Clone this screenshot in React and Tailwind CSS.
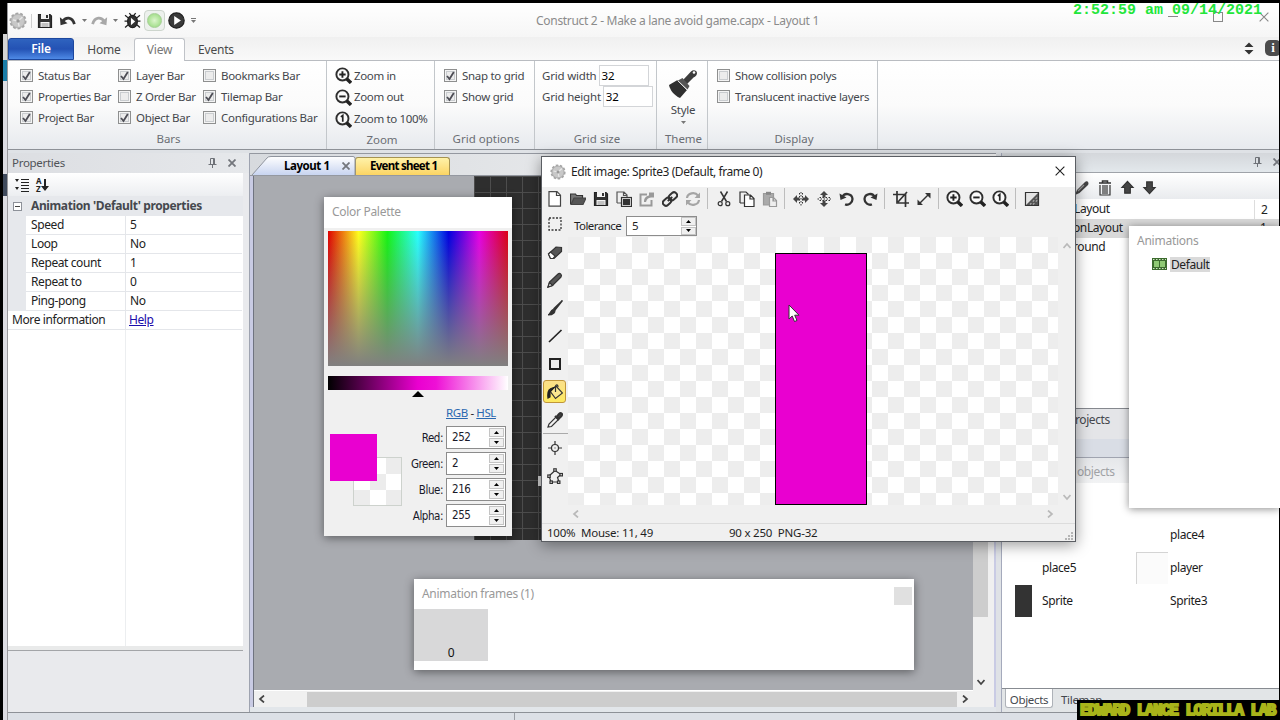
import React from 'react';
import clsx from 'clsx';

const Icon = ({ children, size = 16, className }) => (
  <svg width={size} height={size} viewBox="0 0 16 16" fill="none" stroke="#333" strokeWidth="1.2" className={clsx('shrink-0', className)}>
    {children}
  </svg>
);

const Gear = ({ size = 18 }) => (
  <Icon size={size}>
    <circle cx="8" cy="8" r="6.6" fill="#b5b5b5" stroke="#a5a5a5" strokeWidth="2" strokeDasharray="2.4 1.7" />
    <circle cx="8" cy="8" r="5.8" fill="#c8c8c8" stroke="#b5b5b5" strokeWidth="0.8" />
    <path d="M8 8L12 4.5M8 8L3.5 7M8 8l1 5" stroke="#e8e8e8" />
    <circle cx="8" cy="8" r="1.5" fill="#999" stroke="none" />
  </Icon>
);

const Save = ({ size = 16 }) => (
  <Icon size={size}>
    <path d="M1.5 1.5h11.5l1.5 1.5v11.500h-13z" fill="#333" stroke="#222" />
    <rect x="4" y="1" width="8" height="5" fill="#f4f4f4" stroke="none" />
    <rect x="9" y="2" width="2" height="3" fill="#333" stroke="none" />
    <rect x="3.500" y="9" width="9" height="5" fill="#f4f4f4" stroke="none" />
    <path d="M4.500 11h7M4.500 13h7" stroke="#777" strokeWidth="0.8" />
  </Icon>
);

const Curve = ({ color, flip }) => (
  <Icon size={17} className={flip ? '-scale-x-100' : ''}>
    <path d="M3.500 9C6 4.500 12.500 4 14.500 11.500" stroke={color} strokeWidth="2.600" />
    <path d="M0.800 5l0.700 7.500 6.500-2z" fill={color} stroke="none" />
  </Icon>
);

const Bug = () => (
  <Icon size={17}>
    <path d="M1 3l3.500 3M15 3l-3.500 3M0.500 8.500h4M15.500 8.500h-4M1 14.500l3.500-3M15 14.500l-3.500-3M5 1l2 2.500M11 1l-2 2.500" stroke="#222" />
    <ellipse cx="8" cy="9" rx="4.600" ry="5.800" fill="#333" stroke="#222" />
    <path d="M6.500 5.500l4 3.500-4 3.500z" fill="#fff" stroke="none" />
  </Icon>
);

const Play = () => (
  <Icon size={17}>
    <circle cx="8" cy="8" r="7.200" fill="#3a3a3a" stroke="#222" />
    <path d="M5.800 3.800l6.400 4.200-6.400 4.200z" fill="#fff" stroke="none" />
  </Icon>
);

const Zoom = ({ kind }) => (
  <Icon size={17}>
    <circle cx="7" cy="7" r="5.700" stroke="#2e2e2e" strokeWidth="1.800" fill="#fafafa" />
    <path d="M11 11l4 4" stroke="#222" strokeWidth="3.200" />
    {kind === 'in' && <path d="M4 7h6M7 4v6" stroke="#222" strokeWidth="1.800" />}
    {kind === 'out' && <path d="M4 7h6" stroke="#222" strokeWidth="1.800" />}
    {kind === 'one' && <path d="M5.500 5.500L7.300 4.200V10" stroke="#222" strokeWidth="1.600" />}
  </Icon>
);

const Brush = () => (
  <svg width="30" height="31" viewBox="0 0 30 31">
    <path d="M15 12L23 3.500c2-2 5.800-1.500 6 1.500 0 2.500-1.500 3.300-3.500 4.500L19 16z" fill="#3c3c3c" />
    <circle cx="26" cy="4.500" r="1.300" fill="#fff" />
    <path d="M10 12.500l4.500-2.500 7 8-2 3.500z" fill="#555" />
    <path d="M9.500 12L1 17c1 5 5 10.500 11 13l7-8z" fill="#2f2f2f" />
    <path d="M9.500 12.500l9.500 9.500" stroke="#ddd" strokeWidth="1" />
  </svg>
);

const Pin = () => (
  <svg width="9" height="10" viewBox="0 0 9 10" fill="none" stroke="#6f7278">
    <path d="M2.500 6V0.500h4V6M5.500 0.500V6M0.500 6.500h8M4.500 6.500V10" />
  </svg>
);

const Cross = ({ size = 8, color = '#73767c', width = 1.800 }) => (
  <svg width={size} height={size} viewBox="0 0 8 8" stroke={color} strokeWidth={width} className="shrink-0">
    <path d="M0.500 0.500l7 7M7.500 0.500l-7 7" />
  </svg>
);

const Chevron = ({ d, color = '#b9b9b9' }) => (
  <svg width="8" height="8" viewBox="0 0 8 8" fill="none" stroke={color} strokeWidth="1.700" className="shrink-0">
    <path d={d} />
  </svg>
);
const LEFT = 'M6 0.500L2 4l4 3.500';
const RIGHT = 'M2 0.500L6 4 2 7.500';
const UP = 'M0.500 6L4 2l3.500 4';
const DOWN = 'M0.500 2L4 6l3.500-4';

const Check = ({ on, children }) => (
  <label className="flex h-[21px] items-center whitespace-nowrap">
    <span className="mr-[5px] flex size-[13px] items-center justify-center border border-[#8e8f8f] bg-[#f4f4f4]">
      <span className="flex size-[9px] items-center justify-center border border-[#c9cccf] bg-[#ececec]">
        {on && (
          <svg width="9" height="10" viewBox="0 0 9 10" fill="none" stroke="#4d4d55" strokeWidth="1.800" className="shrink-0">
            <path d="M1 5l2.500 3L7.800 1" />
          </svg>
        )}
      </span>
    </span>
    {children}
  </label>
);

const Group = ({ title, className, children }) => (
  <div className={clsx('flex shrink-0 flex-col border-r border-[#c3c7cb] pt-[4px]', className)}>
    <div className="h-[65px]">{children}</div>
    <div className="pl-[3px] text-center leading-[20px] tracking-normal text-[#6b6e74]">{title}</div>
  </div>
);

const Caret = () => (
  <svg width="5" height="3" viewBox="0 0 5 3" fill="#777"><path d="M0 0h5L2.500 3z" /></svg>
);

const TitleBar = () => (
  <div className="flex h-[34px] items-center bg-gradient-to-b from-white to-[#f6f6f6]">
    <div className="flex w-[190px] shrink-0 items-center pt-px">
      <div className="ml-px flex w-[22px] justify-start"><Gear /></div>
      <div className="mr-[5px] h-[14px] w-px bg-[#cfcfcf]" />
      <Save />
      <div className="ml-[6px]"><Curve color="#333" /></div>
      <div className="ml-[6px]"><Caret /></div>
      <div className="ml-[4px]"><Curve color="#a8a8a8" flip /></div>
      <div className="ml-[5px]"><Caret /></div>
      <div className="ml-[6px]"><Bug /></div>
      <div className="ml-[3px] flex size-[21px] items-center justify-center rounded-sm border border-[#cdd5cd] bg-[#edf1ed]">
        <div className="size-[15px] rounded-full border border-[#a6cf96] bg-radial from-[#dcf5cc] to-[#8fd673]" />
      </div>
      <div className="ml-[3px]"><Play /></div>
      <div className="ml-[6px] flex flex-col items-center gap-px"><div className="h-px w-[5px] bg-[#777]" /><Caret /></div>
    </div>
    <div className="w-[959px] pt-px text-center text-[12px] tracking-[-0.310px] text-[#8b8b8b]">Construct 2 - Make a lane avoid game.capx - Layout 1</div>
    <div className="ml-[11px] flex items-center pb-[7px]">
      <div className="h-px w-[10px] bg-[#888]" />
      <div className="ml-[35px] size-[10px] border border-[#888]" />
      <div className="ml-[36px]"><Cross size={10} color="#888" width={0.900} /></div>
    </div>
  </div>
);

const Tabs = () => (
  <div className="flex h-[24px] items-end border-b border-[#b9bcc1] bg-gradient-to-b from-[#f0f0f0] to-[#f9f9f9] tracking-[-0.2px] text-[#4a4a4a]">
    <div className="h-[22px] w-[66px] rounded-t-[3px] border border-[#1c479e] bg-gradient-to-b from-[#2f63bf] via-[#2452b4] to-[#4f8ae6] text-center leading-[20px] font-semibold text-white">File</div>
    <div className="w-[60px] text-center leading-[21px]">Home</div>
    <div className="-mb-px h-[23px] w-[51px] rounded-t-[3px] border border-b-0 border-[#c0c3c8] bg-white text-center leading-[22px] text-[#777]">View</div>
    <div className="w-[62px] text-center leading-[21px]">Events</div>
    <div className="ml-auto flex h-[24px] items-center gap-[11px]">
      <svg width="10" height="13" viewBox="0 0 10 13" fill="#333"><path d="M0.500 5L5 0.500 9.500 5zM0.500 8L5 12.500 9.500 8z" /></svg>
      <div className="-mr-[2px] flex size-[16px] items-center justify-center rounded-[5px] bg-[#4c4c4c] font-['Liberation_Serif'] text-[13px] font-bold text-white">i</div>
    </div>
  </div>
);

const Ribbon = () => (
  <div className="flex h-[89px] border-b border-[#8d9197] bg-gradient-to-b from-white via-[#fbfbfb] to-[#e7eaee] text-[11.500px] tracking-[-0.300px] text-[#44474c]">
    <Group title="Bars" className="w-[319px]">
      <div className="flex pl-[12px]">
        <div className="w-[98px]"><Check on>Status Bar</Check><Check on>Properties Bar</Check><Check on>Project Bar</Check></div>
        <div className="w-[85px]"><Check on>Layer Bar</Check><Check>Z Order Bar</Check><Check on>Object Bar</Check></div>
        <div><Check>Bookmarks Bar</Check><Check on>Tilemap Bar</Check><Check>Configurations Bar</Check></div>
      </div>
    </Group>
    <Group title="Zoom" className="w-[108px]">
      <div className="pl-[8px] tracking-[-0.350px]">
        <div className="flex h-[21px] items-center gap-[2px]"><Zoom kind="in" />Zoom in</div>
        <div className="flex h-[22px] items-center gap-[2px]"><Zoom kind="out" />Zoom out</div>
        <div className="flex h-[22px] items-center gap-[2px] whitespace-nowrap"><Zoom kind="one" />Zoom to 100%</div>
      </div>
    </Group>
    <Group title="Grid options" className="w-[100px]">
      <div className="pl-[9px]"><Check on>Snap to grid</Check><Check on>Show grid</Check></div>
    </Group>
    <Group title="Grid size" className="w-[122px]">
      <div className="pl-[7px] tracking-[-0.200px]">
        <div className="flex h-[21px] items-center gap-[2px] whitespace-nowrap">Grid width<span className="h-[21px] w-[50px] border border-[#d3d5d8] bg-white pl-[2px] leading-[19px] text-black">32</span></div>
        <div className="flex h-[21px] items-center gap-[2px] whitespace-nowrap">Grid height<span className="h-[21px] w-[50px] border border-[#d3d5d8] bg-white pl-[2px] leading-[19px] text-black">32</span></div>
      </div>
    </Group>
    <Group title="Theme" className="w-[51px]">
      <div className="flex flex-col items-center pt-[3px] pl-[2px] leading-[16px]"><Brush /><span className="mt-[3px]">Style</span><span className="mt-[3px]"><Caret /></span></div>
    </Group>
    <Group title="Display" className="w-[170px]">
      <div className="pl-[9px]"><Check>Show collision polys</Check><Check>Translucent inactive layers</Check></div>
    </Group>
  </div>
);

const props = [['Speed', '5'], ['Loop', 'No'], ['Repeat count', '1'], ['Repeat to', '0'], ['Ping-pong', 'No']];

const Properties = () => (
  <div className="flex w-[241px] shrink-0 flex-col bg-[#e9eaed]">
    <div className="flex h-[20px] items-center bg-gradient-to-r from-[#dcdee2] to-[#e6e8eb] pr-[13px] pl-[4px] text-[11.500px] tracking-[-0.300px] text-[#505358]">
      Properties<span className="mr-[11px] ml-auto"><Pin /></span><Cross />
    </div>
    <div className="flex h-[23px] w-[235px] items-center gap-[7px] bg-gradient-to-b from-white to-[#eceef1] pl-[7px]">
      <svg width="14" height="14" viewBox="0 0 14 14" fill="#222"><path d="M0 1h4L2 4zM0 9h4l-2 3zM6 1h8v1H6zM6 4h8v1H6zM6 7h8v1H6zM6 10h8v1H6zM6 13h8v1H6z" /></svg>
      <div className="flex items-center">
        <div className="flex flex-col text-[8px] leading-[8px] font-bold text-[#222]"><span>A</span><span>Z</span></div>
        <svg width="8" height="12" viewBox="0 0 8 12" fill="#222"><path d="M3 0h2v7h3L4 12 0 7h3z" /></svg>
      </div>
    </div>
    <div className="flex h-[20px] w-[235px] items-center bg-[#e6e8ec] pl-[5px] text-[12px] font-bold text-[#45484e]">
      <span className="mr-[9px] flex size-[9px] items-center justify-center border border-[#8d9199] bg-white"><span className="h-px w-[5px] bg-[#444]" /></span>
      <span className="tracking-[-0.380px]">Animation 'Default' properties</span>
    </div>
    {props.map(([name, value]) => (
      <div key={name} className="flex h-[19px] w-[235px] bg-white pr-px leading-[18px] text-[#222]">
        <div className="w-[18px] bg-[#e6e8ec]" />
        <div className="w-[100px] border-r border-b border-[#e4e6ea] pl-[5px]">{name}</div>
        <div className="flex-1 border-b border-[#e4e6ea] pl-[4px]">{value}</div>
      </div>
    ))}
    <div className="flex h-[19px] w-[235px] bg-white pr-px leading-[18px] text-[#222]">
      <div className="w-[118px] border-r border-b border-[#e4e6ea] pl-[4px]">More information</div>
      <div className="flex-1 border-b border-[#e4e6ea] pl-[3px] text-[#1a0dab] underline">Help</div>
    </div>
    <div className="flex w-[235px] flex-1 bg-white"><div className="w-[118px] border-r border-[#eceef0]" /></div>
    <div className="h-[5px] w-[235px] border-b border-[#a3a5a8] bg-[#e9eaea]" />
    <div className="h-[61px]" />
  </div>
);

const Workspace = () => (
  <div className="flex w-[747px] shrink-0 flex-col border-l border-[#9ea3b0] bg-[#e2e6ea]">
    <div className="relative flex h-[23px] shrink-0 items-end border-t border-b border-[#9498a0] bg-gradient-to-r from-[#d7dade] to-[#fafafa]">
      <div className="relative flex h-[19px] w-[105px] items-center pl-[34px] text-[11.500px] font-bold text-black">
        <svg className="absolute top-0 left-0" width="106" height="19" viewBox="0 0 106 19">
          <defs><linearGradient id="tab" x1="0" y1="0" x2="0" y2="1"><stop offset="0" stopColor="#fff" /><stop offset="1" stopColor="#c8d4f0" /></linearGradient></defs>
          <path d="M2 19L17 2q1-1.500 4-1.500h82q2 0 2 2V19" fill="url(#tab)" stroke="#8f949e" />
        </svg>
        <span className="relative tracking-[-0.450px]">Layout 1</span>
        <span className="relative ml-auto pr-[5px]"><Cross /></span>
      </div>
      <div className="h-[18px] w-[95px] rounded-t-[3px] border border-b-0 border-[#a59352] bg-gradient-to-b from-[#fff2a8] to-[#fbd462] pl-[14px] text-[11.500px] leading-[16px] font-bold tracking-[-0.730px] whitespace-nowrap text-black">Event sheet 1</div>
    </div>
    <div className="flex h-[531px] border-l-[3px] border-[#c9cbe4]">
      <div className="flex w-[720px] shrink-0 flex-col border-l border-[#6f7380]">
        <div className="h-[514px] w-[719px] bg-[#a9abb0] pl-[220px]">
          <div className="h-[364px] bg-[#2e2e2e] bg-[linear-gradient(to_right,#4d4d4d_1px,transparent_1px),linear-gradient(to_bottom,#4d4d4d_1px,transparent_1px)] bg-[size:16px_16px]" />
        </div>
        <div className="flex h-[17px] w-[719px] items-center border-t border-white bg-[#f0f0f0]">
          <span className="w-[53px] pl-[4px]"><Chevron d={LEFT} color="#444" /></span>
          <div className="h-[15px] flex-1 bg-[#cdcdcd]" />
          <span className="w-[16px] pl-[4px]"><Chevron d={RIGHT} color="#444" /></span>
        </div>
      </div>
      <div className="flex w-[23px] flex-col border-r-[2px] border-[#c9cbe4] bg-[#f0f0f0]">
        <div className="h-[441px] w-[15px] bg-[#cdcdcd]" />
        <div className="mt-[61px] ml-[4px]"><Chevron d={DOWN} color="#444" /></div>
      </div>
    </div>
  </div>
);

const RightPanels = () => (
  <div className="ml-[5px] flex flex-1 flex-col border-l border-[#a5aabc] bg-[#e3e6ea]">
    <div className="flex h-[20px] items-center border-b border-[#9fa3a9] bg-gradient-to-b from-[#d4d7db] to-[#e3e8ec]">
      <span className="mr-[11px] ml-auto"><Pin /></span><span className="-mr-[2px]"><Cross /></span>
    </div>
    <div className="flex h-[26px] items-center gap-[7px] bg-gradient-to-b from-white to-[#e9ebee] pt-[4px] pl-[72px]">
      <Icon><path d="M1 15l2-5 8-8c2-2 4.500 0.500 3 3l-8.500 8z" fill="#444" stroke="none" /><path d="M4 11l6-6" stroke="#999" /></Icon>
      <Icon><path d="M2 3h12M5.500 3V1h5v2" strokeWidth="1.500" /><path d="M3 5v10h10V5M6 5v9M8 5v9M10 5v9" /></Icon>
      <Icon size={15}><path d="M8 1.500l6 6.500h-3v6H5V8H2z" fill="#444" /></Icon>
      <Icon size={15}><path d="M8 14.500L2 8h3V2h6v6h3z" fill="#444" /></Icon>
    </div>
    <div className="h-[209px] bg-white pt-px text-[#222]">
      <div className="flex h-[19px] items-center pl-[72px]">Layout<span className="ml-auto h-[19px] w-[25px] border-l border-[#ddd] pl-[6px] leading-[19px]">2</span></div>
      <div className="flex h-[19px] items-center bg-[#d9d9d9] pl-[71px]">onLayout<span className="ml-auto w-[19px]">1</span></div>
      <div className="flex h-[19px] items-center pl-[71px]">round</div>
    </div>
    <div className="h-[32px] border-t border-[#85888e] bg-[#e4e5e8] pl-[73px] leading-[21px] text-[#45484d]">rojects</div>
    <div className="h-[19px] border-b border-[#a0a4b0] bg-[#d9dde5]" />
    <div className="h-[25px] bg-gradient-to-b from-[#e5e7ea] to-[#f2f3f4] pl-[75px] leading-[28px] text-[#a0a2a6]">objects</div>
    <div className="h-[205px] bg-white pt-[35px] text-[#1c1c1c]">
      <div className="grid auto-rows-[33px] grid-cols-[134px_1fr]">
        <div />
        <div className="flex items-center pl-[34px]">place4</div>
        <div className="flex items-center pl-[40px]">place5</div>
        <div className="flex items-center"><span className="mr-[2px] size-[32px] border-t border-l border-[#d4d4d4] bg-[#fbfbfb]" />player</div>
        <div className="flex items-center pl-[13px]"><span className="mr-[10px] h-[32px] w-[17px] bg-[#333]" />Sprite</div>
        <div className="flex items-center pl-[34px]">Sprite3</div>
      </div>
    </div>
    <div className="flex h-[24px] border-t border-[#878b91] bg-[#e2e5e7] pl-[3px] text-[11.500px] tracking-[-0.300px] text-[#45484d]">
      <div className="h-[19px] w-[48px] rounded-b-[3px] border border-t-0 border-[#aeb2b8] bg-white text-center leading-[21px]">Objects</div>
      <div className="ml-[8px] leading-[21px]">Tilemap</div>
    </div>
  </div>
);

const Spinner = ({ className }) => (
  <span className={clsx('flex flex-col gap-px', className)}>
    <span className="flex flex-1 items-center justify-center border border-[#c4c4c4] bg-[#f0f0f0]"><svg width="5" height="3" viewBox="0 0 5 3"><path d="M0 3h5L2.500 0z" /></svg></span>
    <span className="flex flex-1 items-center justify-center border border-[#c4c4c4] bg-[#f0f0f0]"><svg width="5" height="3" viewBox="0 0 5 3"><path d="M0 0h5L2.500 3z" /></svg></span>
  </span>
);

const ColorPalette = () => (
  <div className="absolute top-[197px] left-[324px] flex h-[339px] w-[188px] flex-col bg-[#f0f0f0] shadow-[0_2px_9px_rgba(0,0,0,0.45)]">
    <div className="h-[31px] bg-white pl-[8px] leading-[30px] tracking-[-0.300px] text-[#999]">Color Palette</div>
    <div className="mx-[4px] mt-[3px] h-[135px] bg-[linear-gradient(to_bottom,rgba(128,128,128,0),#808080),linear-gradient(to_right,#e00000,#ffff1e_17%,#14f514_33%,#28ffff_50%,#0000e0_67%,#e600e6_84%,#dc0014)]" />
    <div className="mx-[4px] mt-[10px] h-[14px] bg-[linear-gradient(to_right,#000,#ea00d0_50%,#ee10d6_60%,#fff)]" />
    <svg className="mt-px ml-[88px] shrink-0" width="12" height="6" viewBox="0 0 12 6"><path d="M0 6h12L6 0z" /></svg>
    <div className="mt-[8px] pl-[122px] text-[11.500px] leading-[16px] whitespace-nowrap text-[#222]"><span className="text-[#2a68b0] underline">RGB</span> - <span className="text-[#2a68b0] underline">HSL</span></div>
    <div className="mt-[5px] flex">
      <div className="relative ml-[6px] h-[80px] w-[73px]">
        <div className="absolute top-[31px] left-[23px] size-[49px] border border-[#cdd2cd] bg-[conic-gradient(#fff_25%,#ececec_0_50%,#fff_0_75%,#ececec_0)] bg-[size:32px_32px]" />
        <div className="absolute top-[8px] left-0 size-[47px] bg-[#e900d0]" />
      </div>
      <div className="flex w-[103px] flex-col gap-[3px] font-['DejaVu_Sans_Condensed','DejaVu_Sans',sans-serif] text-[11.500px] text-[#1a1a2a]">
        {[['Red', 252], ['Green', 2], ['Blue', 216], ['Alpha', 255]].map(([name, value]) => (
          <div key={name} className="flex h-[23px] items-center justify-end tracking-[-0.450px]">
            <span className="mr-[3px]">{name}:</span>
            <span className="flex h-[23px] w-[60px] border border-[#8c8c8c] bg-white pl-[5px] leading-[21px]">{value}<Spinner className="my-px mr-px ml-auto w-[15px]" /></span>
          </div>
        ))}
      </div>
    </div>
  </div>
);

const NewFile = () => <Icon><path d="M2 0.700h8l3.500 3.500v11H2zM9.500 1v3.500h4" fill="#fff" stroke="#444" /></Icon>;
const Open = () => <Icon><path d="M0.500 13V3h5l1 1.500h6V7" fill="#777" /><path d="M1 13.500L4 7h12l-3 6.500z" fill="#555" stroke="#444" /></Icon>;
const SaveAs = () => <Icon><path d="M1 12V1h7l3 3v2M1 12h4M7.500 1v3.500H11" stroke="#555" /><rect x="5.500" y="6.500" width="10" height="9" fill="#eee" /><rect x="7.500" y="8.500" width="6" height="5" fill="#333" /></Icon>;
const Export = () => <Icon><path d="M8 3.500H1.500v11h11V9" stroke="#999" strokeWidth="2" /><path d="M5 11c0-4 2-6 5-6.500V1.500h5v5h-3C9 7 8 8 7 11z" fill="#999" stroke="none" /></Icon>;
const Chain = () => <Icon><g transform="rotate(-42 8 8)" strokeWidth="2"><rect x="-0.500" y="5" width="9" height="6" rx="3" /><rect x="7.500" y="5" width="9" height="6" rx="3" /><path d="M5 8h6" /></g></Icon>;
const Refresh = () => <Icon><path d="M2 7c0.500-5 8-6.500 11-2.500M14 9c-0.500 5-8 6.500-11 2.500" stroke="#a5a5a5" strokeWidth="2.200" /><path d="M15 1.500V7H9.500zM1 14.500V9h5.500z" fill="#a5a5a5" stroke="none" /></Icon>;
const Cut = () => <Icon><path d="M4.500 0.500l6 10M11.500 0.500l-6 10" strokeWidth="1.500" /><circle cx="4.200" cy="12.700" r="2" /><circle cx="11.800" cy="12.700" r="2" /></Icon>;
const Copy = () => <Icon><path d="M1 12V1h6l2.500 2.500M1 12h4" /><path d="M5.500 4h6l3.500 3.500v8H5.500zM11 4v4h4" fill="#fff" /></Icon>;
const Paste = () => <Icon><path d="M1.500 2.500h10V14h-10z" fill="#aaa" stroke="#999" /><rect x="4" y="0.800" width="5" height="3" fill="#888" stroke="none" /><path d="M7.500 6.500h4l3 3v6h-7zM11 6.500V10h3.500" fill="#eee" stroke="#999" /></Icon>;
const Flip = ({ vertical }) => <Icon className={vertical ? 'rotate-90' : ''}><path d="M8 1v14M6.500 2v12M9.500 2v12" strokeDasharray="1.500 1.500" strokeWidth="1" /><path d="M0 8l4-4v2.500h2.500v3H4V12zM16 8l-4-4v2.500H9.500v3H12V12z" fill="#444" stroke="none" /></Icon>;
const Rotate = ({ right }) => <Icon className={right ? '-scale-x-100' : ''}><path d="M3.500 6C5 1.500 13 2 13.500 8c0 4-4 6.500-7.500 5.500" strokeWidth="2.300" /><path d="M0.500 2.500l1 6.500 6-2.500z" fill="#333" stroke="none" /></Icon>;
const Crop = () => <Icon><path d="M4 0v12h12M0 3.500h12.500V16M14 1L5 11" strokeWidth="1.700" /></Icon>;
const Resize = () => <Icon><path d="M4 12l8-8" strokeWidth="1.500" /><path d="M9 2h5.500v5.500zM1.500 8.500L7 14H1.500z" fill="#333" stroke="none" /></Icon>;
const AlphaBox = () => <Icon><path d="M1.500 1.500h13v13h-13z" fill="#e4e4e4" stroke="#333" /><path d="M14 2v12H2z" fill="#555" stroke="none" /><path d="M6 13.500l7.500-7.500M9 13.500l5-5" stroke="#aaa" strokeDasharray="2 2" /></Icon>;

const Divider = () => <div className="mx-[3px] h-[21px] w-[2px] border-l border-[#bdbdbd]" />;
const Cell = ({ children }) => <div className="flex w-[23px] justify-center">{children}</div>;

const Tool = ({ active, children }) => (
  <div className={clsx('mb-[5px] flex size-[23px] shrink-0 items-center justify-center rounded-[3px] border', active ? 'border-[#c0963a] bg-gradient-to-b from-[#fbe08a] to-[#fde95f]' : 'border-transparent')}>
    <Icon>{children}</Icon>
  </div>
);

const EditImage = () => (
  <div className="absolute top-[156px] left-[541px] flex h-[386px] w-[535px] flex-col border border-[#5b5e63] bg-[#f0f0f0] text-[#1f1f1f] shadow-[0_3px_14px_rgba(0,0,0,0.4)]">
    <div className="flex h-[30px] shrink-0 items-center bg-white pr-[10px] pl-[8px] text-[12px]">
      <Gear size={16} /><span className="ml-[5px] tracking-[-0.430px]">Edit image: Sprite3 (Default, frame 0)</span>
      <span className="ml-auto pb-[2px]"><Cross size={10} color="#222" width={0.900} /></span>
    </div>
    <div className="flex h-[25px] shrink-0 items-center pb-[2px] pl-px">
      <Cell><NewFile /></Cell><Cell><Open /></Cell><Cell><Save /></Cell><Cell><SaveAs /></Cell><Cell><Export /></Cell><Cell><Chain /></Cell><Cell><Refresh /></Cell>
      <Divider />
      <Cell><Cut /></Cell><Cell><Copy /></Cell><Cell><Paste /></Cell>
      <Divider />
      <Cell><Flip /></Cell><Cell><Flip vertical /></Cell><Cell><Rotate /></Cell><Cell><Rotate right /></Cell>
      <Divider />
      <Cell><Crop /></Cell><Cell><Resize /></Cell>
      <Divider />
      <Cell><Zoom kind="in" /></Cell><Cell><Zoom kind="out" /></Cell><Cell><Zoom kind="one" /></Cell>
      <Divider />
      <Cell><AlphaBox /></Cell>
    </div>
    <div className="flex h-[311px]">
      <div className="flex w-[26px] flex-col pl-[1px]">
        <Tool><path d="M2 2h12v12H2z" strokeDasharray="2 1.500" strokeWidth="1.300" /></Tool>
        <Tool><path d="M1.500 10L9 3l5.500 0.500v4L7 14.500H3.500z" fill="#555" /><path d="M1.500 10l2-2 4.500 4-2 2.500H3.500z" fill="#fff" /></Tool>
        <Tool><path d="M1 15l1.500-5L11 2c2-1.500 4.500 1 3 3l-8.500 8.500z" fill="#555" /><path d="M2.500 10.500l3 3L1 15z" fill="#eee" /></Tool>
        <Tool><path d="M15.500 0.500L7 8.500l1 1.500z" fill="#333" strokeWidth="1.500" /><path d="M1 15c2 0 2.500-5 5-5.500 2 0 2.500 2 1 3.500-1.500 1.500-4 2-6 2z" fill="#333" /></Tool>
        <Tool><path d="M2 14L14.500 2" stroke="#222" strokeWidth="1.700" /></Tool>
        <Tool><path d="M3 3h10v10H3z" stroke="#222" strokeWidth="2" /></Tool>
        <Tool active><path d="M3 7l6-5 6.500 7-7 5.500z" fill="#fbe890" /><path d="M8.500 8V2.500C9 0 11 0.500 11 3" /><path d="M7 3.500C3 4 0 6 1 14l2-1V8z" fill="#222" stroke="#222" /></Tool>
        <Tool><path d="M1 15l1-3 7-7 2.500 2.500-7 7z" /><path d="M8 4l4 4M9.500 5l2.500-3c2-2 4 0 2.500 2L12 6.500z" fill="#444" strokeWidth="2" /></Tool>
        <div className="-mt-[3px] mb-[2px] h-px shrink-0 bg-[#aaa]" />
        <Tool><circle cx="8" cy="8" r="3.500" /><path d="M8 1v3.500M8 11.500V15M1 8h3.500M11.500 8H15M7.500 8h1" /></Tool>
        <Tool><path d="M8 2.500l6 4-3.500 3L12 14H4L2 8z" /><g fill="#fff"><rect x="6.800" y="0.800" width="2.400" height="2.400" /><rect x="13" y="5.500" width="2.400" height="2.400" /><rect x="10.500" y="13" width="2.400" height="2.400" /><rect x="3" y="13" width="2.400" height="2.400" /><rect x="0.800" y="7" width="2.400" height="2.400" /></g></Tool>
      </div>
      <div className="flex flex-1 flex-col">
        <div className="flex h-[25px] items-center pt-[3px] pl-[6px] text-[11.500px] tracking-normal">
          <span className="w-[52px] tracking-[-0.550px]">Tolerance</span>
          <span className="flex h-[20px] w-[71px] border border-[#8c8c8c] bg-white pl-[5px] leading-[18px]">5<Spinner className="ml-auto w-[15px]" /></span>
        </div>
        <div className="flex h-[268px]">
          <div className="h-[268px] w-[490px] bg-[conic-gradient(#fff_25%,#ededed_0_50%,#fff_0_75%,#ededed_0)] bg-[size:32px_32px] pt-[16px] pl-[207px]">
            <div className="relative h-[252px] w-[92px] border border-black bg-[#e900d0]">
              <svg className="absolute top-[50px] left-[12px]" width="12" height="19" viewBox="0 0 12 19"><path d="M1 1v14l3.200-3 2.300 5.500 2.500-1-2.300-5.300H11z" fill="#fff" stroke="#333" /></svg>
            </div>
          </div>
          <div className="flex w-[17px] flex-col items-center justify-between pt-[5px] pb-[4px]"><Chevron d={UP} /><Chevron d={DOWN} /></div>
        </div>
        <div className="flex h-[17px] w-[490px] items-center justify-between px-[4px]"><Chevron d={LEFT} /><Chevron d={RIGHT} /></div>
      </div>
    </div>
    <div className="relative flex h-[18px] items-center border-t border-[#dcdcdc] pl-[5px] text-[11.500px] tracking-[-0.220px] whitespace-pre">
      <span className="w-[182px]">100%  Mouse: 11, 49</span>90 x 250  PNG-32
      <svg className="absolute right-px bottom-0" width="10" height="10" viewBox="0 0 10 10" fill="#b5b5b5"><path d="M7 1h2v2H7zM4 4h2v2H4zM7 4h2v2H7zM1 7h2v2H1zM4 7h2v2H4zM7 7h2v2H7z" /></svg>
    </div>
  </div>
);

const Animations = () => (
  <div className="absolute top-[226px] left-[1129px] h-[282px] w-[151px] bg-white shadow-[0_1px_8px_rgba(0,0,0,0.45)]">
    <div className="h-[30px] pl-[8px] leading-[30px] tracking-[-0.250px] text-[#999]">Animations</div>
    <div className="flex h-[16px] items-center pl-[23px]">
      <svg width="15" height="12" viewBox="0 0 15 12"><rect width="15" height="12" fill="#3c6b2e" /><path d="M2 3h11v6H2z" fill="#8fca74" /><path d="M7.500 3v6" stroke="#3c6b2e" /><path d="M1 1.500h13M1 10.500h13" stroke="#cfe8c4" strokeDasharray="1.500 1.500" /></svg>
      <span className="ml-[3px] bg-[#dadada] px-px leading-[15px] text-[#222]">Default</span>
    </div>
  </div>
);

const AnimationFrames = () => (
  <div className="absolute top-[579px] left-[414px] h-[91px] w-[500px] bg-white shadow-[0_2px_9px_rgba(0,0,0,0.45)]">
    <div className="flex h-[30px] items-center justify-between pr-[2px] pl-[8px] tracking-[-0.300px] text-[#999]">Animation frames (1)<span className="mt-[4px] h-[18px] w-[18px] bg-[#e0e0e0]" /></div>
    <div className="flex h-[52px] w-[74px] items-end justify-center bg-[#d8d8d9] text-[#111]">0</div>
  </div>
);

const App = () => (
  <div className="relative flex h-[720px] w-[1280px] overflow-hidden bg-black pt-[3px] pr-px font-['Noto_Sans','Open_Sans',sans-serif] text-[12px] leading-[16px] tracking-[-0.400px]">
    {/* sliver of the window behind */}
    <div className="ml-[3px] flex w-[5px] shrink-0 flex-col border-r border-[#9a9a9e] bg-[#dcdce2] pt-0">
      <div className="h-[31px] bg-black" />
      <div className="h-[26px] bg-[#d4d4d4]" />
      <div className="h-[21px] bg-[#1b7da8]" />
      <div className="mt-[93px] h-[22px] bg-[#3f4a5c]" />
    </div>
    <div className="flex w-[1271px] shrink-0 flex-col overflow-hidden bg-[#dfe2e6]">
      <TitleBar />
      <Tabs />
      <Ribbon />
      <div className="flex h-[562px] shrink-0 pt-[3px]">
        <Properties />
        <Workspace />
        <RightPanels />
      </div>
      <div className="h-[8px] shrink-0 border-t border-[#8d9197] bg-[#dce0e6]"><div className="ml-[506px] h-[7px] w-px bg-[#9a9ea4]" /></div>
    </div>

    <ColorPalette />
    <div className="absolute top-[476px] left-[538px] h-[10px] w-[4px] bg-[#d0d0d0]" />
    <Animations />
    <EditImage />
    <AnimationFrames />

    <div className="absolute top-[2px] left-[1073px] font-['Liberation_Mono',monospace] text-[15px] leading-[18px] font-bold tracking-normal whitespace-nowrap text-[#22e63a]">2:52:59 am 09/14/2021</div>
    <div className="absolute top-[700px] left-[1077px] h-[20px] w-[203px] overflow-hidden bg-black pl-[3px] font-['Liberation_Mono',monospace] text-[16px] leading-[22px] font-black tracking-[-1.480px] whitespace-nowrap text-[#a9b41a] [-webkit-text-stroke:2px_#a9b41a]">EDWARD LANCE LORILLA LAB</div>
  </div>
);

export default App;
